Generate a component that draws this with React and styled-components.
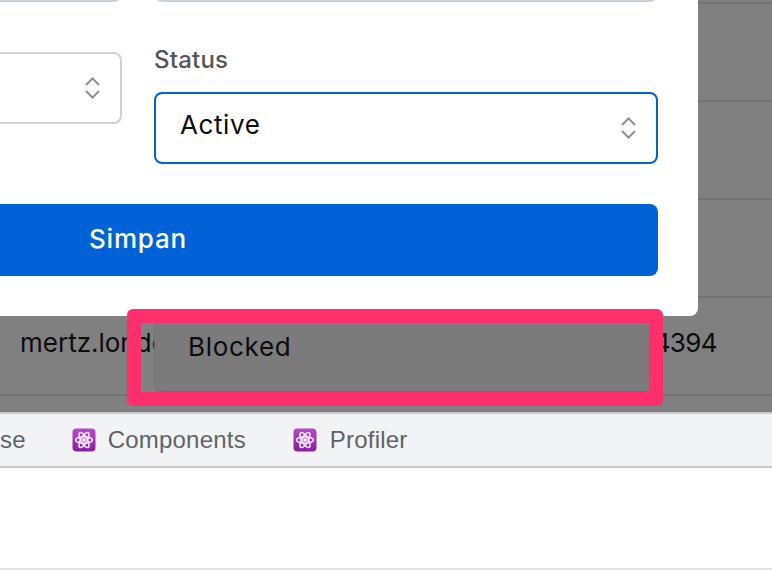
import React from "react";
import styled, { createGlobalStyle } from "styled-components";

const Global = createGlobalStyle`
  html, body { margin: 0; padding: 0; background: #fff; }
  #root { width: 772px; height: 570px; overflow: hidden; }
  * { box-sizing: border-box; }
`;

const Page = styled.div`
  width: 772px;
  height: 570px;
  display: flex;
  flex-direction: column;
  overflow: hidden;
  font-family: "Inter", "Noto Sans", sans-serif;
`;

const Stage = styled.div`
  position: relative;
  height: 412px;
  flex: none;
  background: #808080;
  overflow: hidden;
`;

const Row = styled.div`
  height: ${(p) => p.$h}px;
  border-bottom: 2px solid #727272;
  display: flex;
  justify-content: space-between;
  padding: ${(p) => (p.$h > 10 ? "29px 55px 0 20px" : "0")};
  font-size: 26px;
  line-height: 32px;
  color: #0c0c0c;
`;

const Amount = styled.span`
  letter-spacing: -0.6px;
`;

const Modal = styled.div`
  position: absolute;
  right: 74px;
  bottom: 96px;
  width: 1120px;
  padding: 0 40px 40px;
  background: #fff;
  border-radius: 8px;
  display: flex;
  flex-direction: column;
  gap: 40px;
`;

const Fields = styled.div`
  display: grid;
  grid-template-columns: 504px 504px;
  column-gap: 32px;
  row-gap: 44px;
`;

const Field = styled.div`
  display: flex;
  flex-direction: column;
  padding-top: ${(p) => p.$offset || 0}px;
`;

const Label = styled.div`
  height: 28px;
  margin-bottom: 18px;
  font-size: 24px;
  line-height: 28px;
  font-weight: 500;
  letter-spacing: 0.2px;
  color: #555;
`;

const Select = styled.div`
  height: 72px;
  padding: 0 19px 0 24px;
  display: flex;
  align-items: center;
  justify-content: space-between;
  border: 2px solid ${(p) => (p.$focus ? "#0062d6" : "#cdd1d8")};
  border-radius: 8px;
  background: #fff;
  font-size: 26px;
  letter-spacing: 0.6px;
  color: #0a0a0a;
`;

const SelectText = styled.span`
  display: block;
  margin-top: -8px;
`;

const Chevrons = styled.svg`
  width: 18px;
  height: 26px;
  flex: none;
  margin-left: auto;
  fill: none;
  stroke: #8b8f98;
  stroke-width: 2;
`;

const SaveButton = styled.div`
  height: 72px;
  padding-bottom: 4px;
  border-radius: 8px;
  background: #0062d6;
  color: #fff;
  display: flex;
  align-items: center;
  justify-content: center;
  font-size: 26px;
  font-weight: 500;
  letter-spacing: 0.8px;
`;

const Option = styled.div`
  position: absolute;
  left: 155px;
  top: 318px;
  width: 503px;
  height: 73px;
  padding: 13px 0 0 33px;
  background: #7b7b7b;
  border-radius: 6px;
  box-shadow: 0 1px 1px #6e6e6e, -1px 0 1px #747474;
  font-size: 26px;
  line-height: 32px;
  letter-spacing: 0.7px;
  color: #0c0c0c;
`;

const Highlight = styled.div`
  position: absolute;
  left: 127px;
  top: 309px;
  width: 536px;
  height: 97px;
  border: 14px solid #ff2f6e;
  border-radius: 6px;
`;

const Tabs = styled.div`
  height: 56px;
  flex: none;
  display: flex;
  align-items: center;
  background: #f1f3f4;
  border-top: 2px solid #c9c9ce;
  border-bottom: 2px solid #c9c9ce;
  font-family: "Liberation Sans", Arial, sans-serif;
  font-size: 24px;
  letter-spacing: 0.2px;
  color: #5f6368;
`;

const Tab = styled.div`
  display: flex;
  align-items: center;
  gap: ${(p) => p.$inner || 12}px;
  margin-left: ${(p) => p.$gap}px;
`;

const Atom = styled.svg`
  width: 24px;
  height: 24px;
  flex: none;
`;

const Console = styled.div`
  flex: 1;
  background: #fff;
  border-bottom: 2px solid #e2e2e2;
`;

const ChevronIcon = () => (
  <Chevrons viewBox="0 0 18 26">
    <path d="M3 10 L9.5 3.5 L16 10" />
    <path d="M3 16 L9.5 22.5 L16 16" />
  </Chevrons>
);

const AtomIcon = () => (
  <Atom viewBox="0 0 24 24">
    <defs>
      <linearGradient id="atomBg" x1="0" y1="0" x2="0" y2="1">
        <stop offset="0" stopColor="#b44ac6" />
        <stop offset="1" stopColor="#86209f" />
      </linearGradient>
    </defs>
    <rect x="0.5" y="0.5" width="23" height="23" rx="4" fill="url(#atomBg)" />
    <g fill="none" stroke="#f6e6fa" strokeWidth="1.6">
      <ellipse cx="12" cy="12" rx="8.5" ry="3.2" />
      <ellipse cx="12" cy="12" rx="8.5" ry="3.2" transform="rotate(60 12 12)" />
      <ellipse cx="12" cy="12" rx="8.5" ry="3.2" transform="rotate(120 12 12)" />
    </g>
    <circle cx="12" cy="12" r="2" fill="#f6e6fa" />
  </Atom>
);

export default function App() {
  return (
    <Page>
      <Global />
      <Stage>
        <Row $h={4} />
        <Row $h={98} />
        <Row $h={98} />
        <Row $h={98} />
        <Row $h={98}>
          <span>mertz.london</span>
          <Amount>4394</Amount>
        </Row>
        <Modal>
          <Fields>
            <Field>
              <Select />
            </Field>
            <Field>
              <Select />
            </Field>
            <Field $offset={6}>
              <Select>
                <ChevronIcon />
              </Select>
            </Field>
            <Field>
              <Label>Status</Label>
              <Select $focus>
                <SelectText>Active</SelectText>
                <ChevronIcon />
              </Select>
            </Field>
          </Fields>
          <SaveButton>Simpan</SaveButton>
        </Modal>
        <Option>Blocked</Option>
        <Highlight />
      </Stage>
      <Tabs>
        <Tab $gap={0}>se</Tab>
        <Tab $gap={46}>
          <AtomIcon />
          Components
        </Tab>
        <Tab $gap={47} $inner={13}>
          <AtomIcon />
          Profiler
        </Tab>
      </Tabs>
      <Console />
    </Page>
  );
}
